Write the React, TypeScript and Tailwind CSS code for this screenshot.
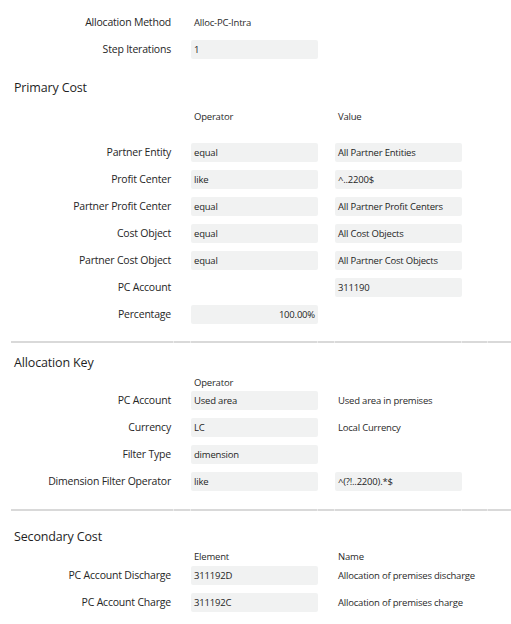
import React from "react";

const Box = ({ children, right = false }: { children?: React.ReactNode; right?: boolean }) => (
  <div
    className={`w-[127px] h-[19px] bg-[#f1f2f2] rounded-[2px] flex items-center px-[3px] pt-[1px] text-[9.5px] tracking-[-0.2px] text-[#1f1f1f] whitespace-nowrap ${right ? "justify-end" : ""}`}
  >
    {children}
  </div>
);

const Plain = ({ children }: { children?: React.ReactNode }) => (
  <div className="w-[127px] h-[19px] flex items-center px-[3px] pt-[1px] text-[9.5px] tracking-[-0.2px] text-[#2a2a2a] whitespace-nowrap">
    {children}
  </div>
);

const Row = ({ label, a, b, mt = true }: { label: string; a: React.ReactNode; b?: React.ReactNode; mt?: boolean }) => (
  <div className={`flex items-center h-[19px] ${mt ? "mt-[8px]" : ""}`}>
    <div className="w-[171px] h-[19px] text-right text-[10.5px] tracking-[-0.2px] text-[#262626] leading-[19px] whitespace-nowrap">
      {label}
    </div>
    <div className="ml-[20px]">{a}</div>
    {b !== undefined && <div className="ml-[17px]">{b}</div>}
  </div>
);

const Header = ({ a, b, className = "" }: { a: string; b?: string; className?: string }) => (
  <div className={`flex text-[9.5px] tracking-[-0.2px] text-[#2a2a2a] leading-[14px] ${className}`}>
    <div className="w-[171px]" />
    <div className="ml-[20px] w-[127px] px-[3px]">{a}</div>
    {b && <div className="ml-[17px] w-[127px] px-[3px]">{b}</div>}
  </div>
);

const Heading = ({ children, className = "" }: { children: React.ReactNode; className?: string }) => (
  <div className={`pl-[14px] text-[12.5px] tracking-[-0.15px] leading-[20px] text-[#1f1f1f] ${className}`}>{children}</div>
);

const Separator = ({ className = "" }: { className?: string }) => (
  <div className={`ml-[11px] flex h-[2px] bg-[#ececec] gap-[1px] ${className}`}>
    <div className="w-[162px] bg-[#d9d9d9]" />
    <div className="w-[16px] bg-[#d9d9d9]" />
    <div className="w-[126px] bg-[#d9d9d9]" />
    <div className="w-[16px] bg-[#d9d9d9]" />
    <div className="w-[126px] bg-[#d9d9d9]" />
    <div className="w-[25px] bg-[#d9d9d9]" />
    <div className="flex-1 bg-[#d9d9d9]" />
  </div>
);

export default function App() {
  return (
    <div
      className="w-[511px] h-[624px] bg-white pt-[13px] overflow-hidden"
      style={{ fontFamily: '"Open Sans", "Noto Sans", sans-serif' }}
    >
      <Row label="Allocation Method" a={<Plain>Alloc-PC-Intra</Plain>} mt={false} />
      <Row label="Step Iterations" a={<Box>1</Box>} />

      <Heading className="mt-[19px]">Primary Cost</Heading>
      <Header a="Operator" b="Value" className="mt-[12px]" />
      <div className="mt-[19px]">
        <Row label="Partner Entity" a={<Box>equal</Box>} b={<Box>All Partner Entities</Box>} mt={false} />
        <Row label="Profit Center" a={<Box>like</Box>} b={<Box>^..2200$</Box>} />
        <Row label="Partner Profit Center" a={<Box>equal</Box>} b={<Box>All Partner Profit Centers</Box>} />
        <Row label="Cost Object" a={<Box>equal</Box>} b={<Box>All Cost Objects</Box>} />
        <Row label="Partner Cost Object" a={<Box>equal</Box>} b={<Box>All Partner Cost Objects</Box>} />
        <Row label="PC Account" a={<Plain />} b={<Box>311190</Box>} />
        <Row label="Percentage" a={<Box right>100.00%</Box>} />
      </div>

      <Separator className="mt-[17px]" />

      <Heading className="mt-[10px]">Allocation Key</Heading>
      <Header a="Operator" className="mt-[3px]" />
      <div className="mt-[1px]">
        <Row label="PC Account" a={<Box>Used area</Box>} b={<Plain>Used area in premises</Plain>} mt={false} />
        <Row label="Currency" a={<Box>LC</Box>} b={<Plain>Local Currency</Plain>} />
        <Row label="Filter Type" a={<Box>dimension</Box>} />
        <Row label="Dimension Filter Operator" a={<Box>like</Box>} b={<Box>^(?!..2200).*$</Box>} />
      </div>

      <Separator className="mt-[18px]" />

      <Heading className="mt-[16px]">Secondary Cost</Heading>
      <Header a="Element" b="Name" className="mt-[3px]" />
      <div className="mt-[2px]">
        <Row label="PC Account Discharge" a={<Box>311192D</Box>} b={<Plain>Allocation of premises discharge</Plain>} mt={false} />
        <Row label="PC Account Charge" a={<Box>311192C</Box>} b={<Plain>Allocation of premises charge</Plain>} />
      </div>
    </div>
  );
}
